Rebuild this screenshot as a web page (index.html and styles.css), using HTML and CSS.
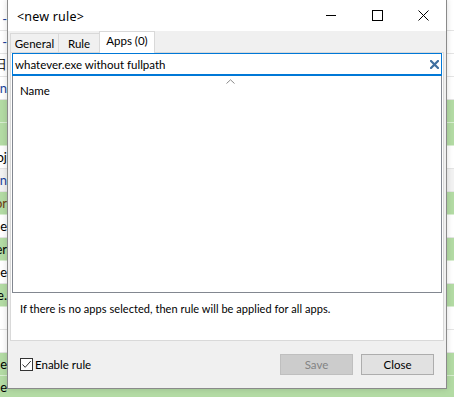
FILE: index.html
```html
<!DOCTYPE html>
<html>
<head>
<meta charset="utf-8">
<link rel="stylesheet" href="styles.css">
</head>
<body>
<div class="desktop">
  <div class="rows">
    <div class="row"><span class="cell blue">-</span></div>
    <div class="row"><span class="cell blue">-</span></div>
    <div class="row"><span class="cell">日</span></div>
    <div class="row"><span class="cell blue">n</span></div>
    <div class="row green"><span class="cell"></span></div>
    <div class="row green"><span class="cell"></span></div>
    <div class="row"><span class="cell">oj</span></div>
    <div class="row gray"><span class="cell blue">n</span></div>
    <div class="row green"><span class="cell brown">or</span></div>
    <div class="row"><span class="cell">e</span></div>
    <div class="row green"><span class="cell">er</span></div>
    <div class="row"><span class="cell">e</span></div>
    <div class="row green"><span class="cell">e.</span></div>
    <div class="row"><span class="cell"></span></div>
    <div class="row"><span class="cell"></span></div>
    <div class="row green"><span class="cell">e</span></div>
    <div class="row green"><span class="cell">e</span></div>
    <div class="row green"><span class="cell"></span></div>
  </div>

  <div class="window">
    <div class="titlebar">
      <span class="title">&lt;new rule&gt;</span>
      <div class="controls">
        <span class="ctl"><svg width="11" height="11" viewBox="0 0 11 11"><path d="M0 5.5H10" stroke="#000" stroke-width="1"/></svg></span>
        <span class="ctl"><svg width="11" height="11" viewBox="0 0 11 11"><rect x="0.5" y="0.5" width="10" height="10" fill="none" stroke="#000" stroke-width="1"/></svg></span>
        <span class="ctl"><svg width="11" height="11" viewBox="0 0 11 11"><path d="M0.5 0.5L10.5 10.5M10.5 0.5L0.5 10.5" stroke="#000" stroke-width="1"/></svg></span>
      </div>
    </div>
    <div class="client">
      <div class="tabs">
        <span class="tab t-general">General</span>
        <span class="tab t-rule">Rule</span>
        <span class="tab active">Apps (0)</span>
      </div>
      <div class="page">
        <div class="edit">
          <span class="edit-text">whatever.exe without fullpath</span>
          <svg class="clear" width="9" height="9" viewBox="0 0 9 9"><path d="M1 1L8 8M8 1L1 8" stroke="#3f6f9f" stroke-width="2.2" stroke-linecap="square"/></svg>
        </div>
        <div class="list">
          <div class="list-head">
            <span class="col-name">Name</span>
            <svg class="sort" width="9" height="5" viewBox="0 0 9 5"><path d="M0.5 4.5L4.5 0.8L8.5 4.5" fill="none" stroke="#8a8a8a" stroke-width="1"/></svg>
          </div>
        </div>
        <div class="notice">If there is no apps selected, then rule will be applied for all apps.</div>
      </div>
      <div class="footer">
        <label class="check">
          <span class="box"><svg width="11" height="11" viewBox="0 0 11 11"><path d="M1.5 5.5L4.2 8.3L9.8 2" fill="none" stroke="#333" stroke-width="1"/></svg></span>
          <span>Enable rule</span>
        </label>
        <div class="buttons">
          <span class="btn disabled">Save</span>
          <span class="btn">Close</span>
        </div>
      </div>
    </div>
  </div>
</div>
</body>
</html>
```

FILE: styles.css
```css
html, body {
  margin: 0;
  padding: 0;
}
body {
  width: 454px;
  height: 397px;
  overflow: hidden;
  background: #ffffff;
  font-family: "Lato", "Liberation Sans", sans-serif;
  font-size: 11.5px;
  color: #000;
}
.desktop {
  position: relative;
  width: 454px;
  height: 397px;
  overflow: hidden;
}
.rows {
  display: flex;
  flex-direction: column;
  padding-top: 8px;
}
.row {
  height: 22px;
  border-bottom: 1px solid #e4e4e4;
  display: flex;
  align-items: center;
  background: #ffffff;
}
.row.green {
  background: #b3dba4;
  border-bottom-color: #d8eed0;
}
.row.gray {
  background: #f2f2f2;
}
.cell {
  width: 7px;
  overflow: hidden;
  display: flex;
  justify-content: flex-end;
  white-space: nowrap;
  font-size: 13px;
}
.cell.blue { color: #1a3f9a; }
.cell.brown { color: #6a3a10; }

.window {
  position: absolute;
  left: 7px;
  top: -1px;
  width: 438px;
  height: 388px;
  border: 1px solid #8a8a8a;
  background: #f0f0f0;
  display: flex;
  flex-direction: column;
  box-shadow: 0 0 6px rgba(0,0,0,0.15);
}
.titlebar {
  height: 31px;
  background: #ffffff;
  display: flex;
  align-items: center;
  justify-content: space-between;
}
.title {
  padding-left: 9px;
  font-family: "Noto Sans", sans-serif;
  font-size: 12.5px;
  letter-spacing: 0.2px;
  padding-top: 1px;
}
.controls {
  display: flex;
  height: 31px;
}
.ctl {
  width: 46px;
  display: flex;
  align-items: center;
  justify-content: center;
}
.client {
  flex: 1;
  display: flex;
  flex-direction: column;
  padding: 0 2px 0 2px;
}
.tabs {
  display: flex;
  align-items: flex-end;
  height: 21px;
  position: relative;
  z-index: 1;
}
.tab {
  height: 18px;
  box-sizing: content-box;
  border: 1px solid #d9d9d9;
  border-bottom: none;
  margin-right: -1px;
  display: flex;
  align-items: center;
  justify-content: center;
  background: #f0f0f0;
}
.t-general { width: 47px; }
.t-rule { width: 40px; }
.tab.active {
  width: 56px;
  height: 22px;
  margin-bottom: -1px;
  background: #ffffff;
  align-items: flex-start;
  padding-top: 2px;
  box-sizing: border-box;
}
.page {
  height: 289px;
  box-sizing: border-box;
  border: 1px solid #d9d9d9;
  background: #ffffff;
  display: flex;
  flex-direction: column;
  padding: 0 1px 0 1px;
}
.edit {
  height: 23px;
  box-sizing: border-box;
  border: 1px solid #0078d7;
  border-bottom-width: 2px;
  display: flex;
  align-items: center;
  justify-content: space-between;
  padding: 0 2px 0 2px;
}
.edit-text {
  font-size: 11.5px;
}
.clear {
  margin-right: 0;
}
.list {
  height: 217px;
  box-sizing: border-box;
  border: 1px solid #828790;
  border-top: none;
  position: relative;
}
.list-head {
  height: 27px;
  display: flex;
  align-items: center;
  padding-left: 7px;
  padding-top: 2px;
  box-sizing: border-box;
}
.sort {
  position: absolute;
  left: 213px;
  top: 3px;
}
.notice {
  flex: 1;
  padding-left: 8px;
  padding-top: 9px;
  font-size: 11px;
  letter-spacing: 0.05px;
}
.footer {
  flex: 1;
  display: flex;
  align-items: center;
  justify-content: space-between;
  padding: 0 10px 0 10px;
}
.check {
  display: flex;
  align-items: center;
  gap: 2px;
}
.box {
  width: 13px;
  height: 13px;
  box-sizing: border-box;
  border: 1px solid #333;
  background: #fff;
  display: flex;
  align-items: center;
  justify-content: center;
}
.buttons {
  display: flex;
  gap: 8px;
}
.btn {
  width: 73px;
  height: 21px;
  box-sizing: border-box;
  border: 1px solid #adadad;
  background: #e1e1e1;
  display: flex;
  align-items: center;
  justify-content: center;
}
.btn.disabled {
  border-color: #bfbfbf;
  background: #cccccc;
  color: #838383;
}
```
